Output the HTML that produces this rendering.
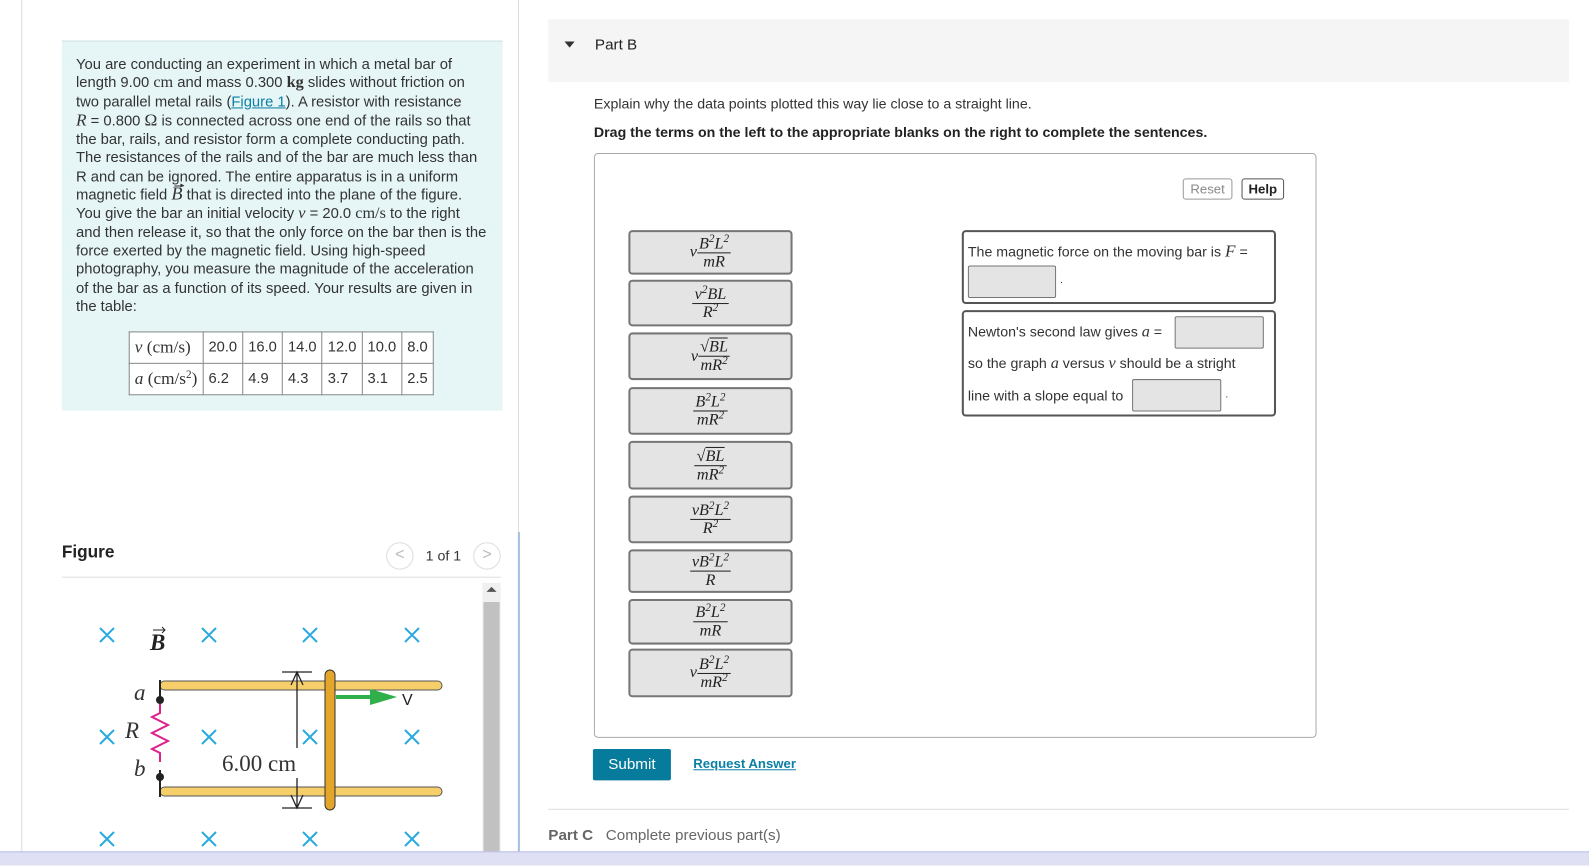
<!DOCTYPE html>
<html><head><meta charset="utf-8"><style>
*{box-sizing:border-box}
body{margin:0;width:1589px;height:854px;position:relative;background:#fff;font-family:"Liberation Sans",Arial,sans-serif;color:#333;overflow:hidden}
#wrap{position:absolute;left:0;top:0;width:1568px;height:843px;transform:scale(1.0135);transform-origin:0 0}
.abs{position:absolute}
.m{font-family:"Liberation Serif",serif;font-style:italic}
.r{font-family:"Liberation Serif",serif}
#intro{left:61px;top:40px;width:435px;height:365px;background:#e6f5f6;border-top:1px solid #d0e0e4}
#intro p{margin:0;position:absolute;left:14px;top:14px;width:405px;font-size:14.6px;line-height:18.3px;color:#333}
.vec{position:relative;display:inline-block}
.vec::before{content:"";position:absolute;left:3px;top:-1px;width:9px;height:1px;background:#333}
.vec::after{content:"";position:absolute;left:9px;top:-3px;border-left:4px solid #333;border-top:2.5px solid transparent;border-bottom:2.5px solid transparent}
table{border-collapse:collapse;position:absolute;left:66px;top:286px;font-size:14.5px}
td{border:1px solid #888;height:31px;padding:0 5px;background:#fff}
.tile{position:absolute;left:620px;width:162px;background:#e4e4e4;border:2px solid #767676;border-radius:4px;display:flex;align-items:center;justify-content:center;font-family:"Liberation Serif",serif;font-style:italic;font-size:16px;color:#222}
.fr{display:inline-flex;flex-direction:column;align-items:center;line-height:17px;vertical-align:middle}
.fr .n{border-bottom:1px solid #222;padding:0 2px}
sup{font-size:11px;vertical-align:6px;line-height:0}
.blank{position:absolute;background:#e4e4e4;border:1px solid #767676;border-radius:2px}
.box{position:absolute;border:2px solid #555;border-radius:4px;font-size:14px;color:#333}
</style></head><body>
<div id="wrap">
<div class="abs" style="left:21px;top:0;width:1px;height:854px;background:#d5dbe3"></div>
<div class="abs" style="left:511px;top:0;width:1px;height:854px;background:#d5dbe3"></div>
<div class="abs" style="left:511px;top:525px;width:2px;height:329px;background:#a8bfe0"></div>
<div class="abs" style="left:0;top:840px;width:1589px;height:14px;background:#dfe0f3;border-top:1px solid #b9bce6"></div>

<div id="intro" class="abs"><p>You are conducting an experiment in which a metal bar of length 9.00 <span class="r" style="font-size:16px">cm</span> and mass 0.300 <span class="r" style="font-weight:bold;font-size:16px">kg</span> slides without friction on two parallel metal rails (<span style="color:#0b7fa5;text-decoration:underline">Figure 1</span>). A resistor with resistance <span style="white-space:nowrap"><span class="m" style="font-size:17px">R</span> = 0.800 <span class="r" style="font-size:17px">Ω</span></span> is connected across one end of the rails so that the bar, rails, and resistor form a complete conducting path. The resistances of the rails and of the bar are much less than R and can be ignored. The entire apparatus is in a uniform magnetic field <span class="m vec" style="font-size:18px;line-height:14px">B</span> that is directed into the plane of the figure. You give the bar an initial velocity <span class="m" style="font-size:16px">v</span> = 20.0 <span class="r" style="font-size:16px">cm/s</span> to the right and then release it, so that the only force on the bar then is the force exerted by the magnetic field. Using high-speed photography, you measure the magnitude of the acceleration of the bar as a function of its speed. Your results are given in the table:</p>
<table><tr><td class="r" style="font-size:17px"><i>v</i> (cm/s)</td><td>20.0</td><td>16.0</td><td>14.0</td><td>12.0</td><td>10.0</td><td>8.0</td></tr>
<tr><td class="r" style="font-size:17px"><i>a</i> (cm/s<sup>2</sup>)</td><td>6.2</td><td>4.9</td><td>4.3</td><td>3.7</td><td>3.1</td><td>2.5</td></tr></table></div>

<div class="abs" style="left:61px;top:535px;font-size:17px;font-weight:bold;color:#222">Figure</div>
<div class="abs" style="left:381px;top:535px;width:27px;height:27px;border:1px solid #ddd;border-radius:50%;color:#bbb;text-align:center;line-height:24px;font-size:16px">&lt;</div>
<div class="abs" style="left:420px;top:540px;font-size:14px;color:#333">1 of 1</div>
<div class="abs" style="left:467px;top:535px;width:27px;height:27px;border:1px solid #ddd;border-radius:50%;color:#bbb;text-align:center;line-height:24px;font-size:16px">&gt;</div>
<div class="abs" style="left:61px;top:569px;width:433px;height:1px;background:#ddd"></div>
<div class="abs" style="left:476px;top:575px;width:18px;height:265px;background:#f0f0f0"></div>
<div class="abs" style="left:477px;top:594px;width:16px;height:246px;background:#c1c1c1"></div>
<div class="abs" style="left:480px;top:579px;width:0;height:0;border-left:5px solid transparent;border-right:5px solid transparent;border-bottom:5px solid #555"></div>

<div class="abs" style="left:541px;top:19px;width:1007px;height:62px;background:#f5f5f5"></div>
<div class="abs" style="left:557px;top:41px;width:0;height:0;border-left:5px solid transparent;border-right:5px solid transparent;border-top:6px solid #333"></div>
<div class="abs" style="left:587px;top:36px;font-size:15px;color:#222">Part B</div>
<div class="abs" style="left:586px;top:94px;font-size:14px;color:#333">Explain why the data points plotted this way lie close to a straight line.</div>
<div class="abs" style="left:586px;top:122px;font-size:14px;font-weight:bold;color:#222">Drag the terms on the left to the appropriate blanks on the right to complete the sentences.</div>
<div class="abs" style="left:586px;top:151px;width:713px;height:577px;border:1px solid #aaa;border-radius:4px"></div>
<div class="abs" style="left:1167px;top:176px;width:49px;height:21px;border:1px solid #999;border-radius:3px;font-size:13px;color:#888;text-align:center;line-height:19px">Reset</div>
<div class="abs" style="left:1225px;top:176px;width:42px;height:21px;border:1px solid #555;border-radius:3px;font-size:13px;font-weight:bold;color:#222;text-align:center;line-height:19px">Help</div>

<div class="tile" style="top:227px;height:44px">v<span class="fr"><span class="n">B<sup>2</sup>L<sup>2</sup></span><span>mR</span></span></div>
<div class="tile" style="top:276px;height:46px"><span class="fr"><span class="n">v<sup>2</sup>BL</span><span>R<sup>2</sup></span></span></div>
<div class="tile" style="top:328px;height:47px">v<span class="fr"><span class="n">√<span style="border-top:1px solid #222">BL</span></span><span>mR<sup>2</sup></span></span></div>
<div class="tile" style="top:382px;height:47px"><span class="fr"><span class="n">B<sup>2</sup>L<sup>2</sup></span><span>mR<sup>2</sup></span></span></div>
<div class="tile" style="top:435px;height:48px"><span class="fr"><span class="n">√<span style="border-top:1px solid #222">BL</span></span><span>mR<sup>2</sup></span></span></div>
<div class="tile" style="top:489px;height:47px"><span class="fr"><span class="n">vB<sup>2</sup>L<sup>2</sup></span><span>R<sup>2</sup></span></span></div>
<div class="tile" style="top:542px;height:43px"><span class="fr"><span class="n">vB<sup>2</sup>L<sup>2</sup></span><span>R</span></span></div>
<div class="tile" style="top:591px;height:45px"><span class="fr"><span class="n">B<sup>2</sup>L<sup>2</sup></span><span>mR</span></span></div>
<div class="tile" style="top:640px;height:48px">v<span class="fr"><span class="n">B<sup>2</sup>L<sup>2</sup></span><span>mR<sup>2</sup></span></span></div>

<div class="box" style="left:949px;top:227px;width:310px;height:73px">
<div class="abs" style="left:4px;top:9px">The magnetic force on the moving bar is <span class="m" style="font-size:17px">F</span> =</div>
<div class="blank" style="left:4px;top:33px;width:87px;height:32px"></div>
<div class="abs" style="left:95px;top:42px;font-size:10px">.</div>
</div>
<div class="box" style="left:949px;top:306px;width:310px;height:105px">
<div class="abs" style="left:4px;top:11px">Newton's second law gives <span class="m" style="font-size:16px">a</span> =</div>
<div class="blank" style="left:208px;top:4px;width:88px;height:32px"></div>
<div class="abs" style="left:4px;top:42px">so the graph <span class="m" style="font-size:16px">a</span> versus <span class="m" style="font-size:16px">v</span> should be a stright</div>
<div class="abs" style="left:4px;top:74px">line with a slope equal to</div>
<div class="blank" style="left:166px;top:66px;width:88px;height:32px"></div>
<div class="abs" style="left:258px;top:76px;font-size:10px">.</div>
</div>

<div class="abs" style="left:585px;top:739px;width:77px;height:31px;background:#067b9b;border-radius:2px;color:#fff;font-size:15px;text-align:center;line-height:31px">Submit</div>
<div class="abs" style="left:684px;top:746px;font-size:13px;font-weight:bold;color:#0b7fa5;text-decoration:underline">Request Answer</div>
<div class="abs" style="left:541px;top:798px;width:1007px;height:1px;background:#ddd"></div>
<div class="abs" style="left:541px;top:816px;font-size:15px;color:#666"><b>Part C</b>&nbsp;&nbsp; Complete previous part(s)</div>
</div>

<svg class="abs" style="left:60px;top:580px" width="415" height="271">
<g stroke="#29a9e0" stroke-width="2">
<path d="M40 48l14 14M54 48l-14 14M142 48l14 14M156 48l-14 14M243 48l14 14M257 48l-14 14M345 48l14 14M359 48l-14 14"/>
<path d="M40 150l14 14M54 150l-14 14M142 150l14 14M156 150l-14 14M243 150l14 14M257 150l-14 14M345 150l14 14M359 150l-14 14"/>
<path d="M40 252l14 14M54 252l-14 14M142 252l14 14M156 252l-14 14M243 252l14 14M257 252l-14 14M345 252l14 14M359 252l-14 14"/>
</g>
<text x="90" y="70" font-family="Liberation Serif" font-weight="bold" font-style="italic" font-size="23" fill="#222">B</text>
<path d="M93 50h12M102 47l3 3-3 3" stroke="#222" fill="none"/>
<rect x="100" y="101" width="282" height="9" rx="4.5" fill="#f6cf6a" stroke="#555"/>
<rect x="100" y="207" width="282" height="9" rx="4.5" fill="#f6cf6a" stroke="#555"/>
<path d="M100 100v22M100 190v27" stroke="#222" stroke-width="2"/>
<circle cx="100" cy="120" r="4" fill="#222"/><circle cx="100" cy="197" r="4" fill="#222"/>
<path d="M100 124v9l-8 4 16 8-16 8 16 8-16 8 8 4v9" stroke="#e0208c" stroke-width="2" fill="none"/>
<text x="74" y="120" font-family="Liberation Serif" font-style="italic" font-size="23" fill="#333">a</text>
<text x="65" y="158" font-family="Liberation Serif" font-style="italic" font-size="23" fill="#333">R</text>
<text x="74" y="196" font-family="Liberation Serif" font-style="italic" font-size="23" fill="#333">b</text>
<g stroke="#222" fill="none" stroke-width="1.3"><path d="M222 92h30M222 228h30M237 92v76M237 198v30M231 105l6-13 6 13M231 215l6 13 6-13"/></g>
<text x="162" y="191" font-family="Liberation Serif" font-size="23" fill="#333">6.00 cm</text>
<rect x="265" y="90" width="10" height="140" rx="5" fill="#e3a52a" stroke="#333"/>
<path d="M276 115h34v-6l27 8-27 8v-6h-34z" fill="#2fb04a"/>
<text x="342" y="125" font-family="Liberation Sans" font-size="16" fill="#222">V</text>
</svg>
</body></html>
